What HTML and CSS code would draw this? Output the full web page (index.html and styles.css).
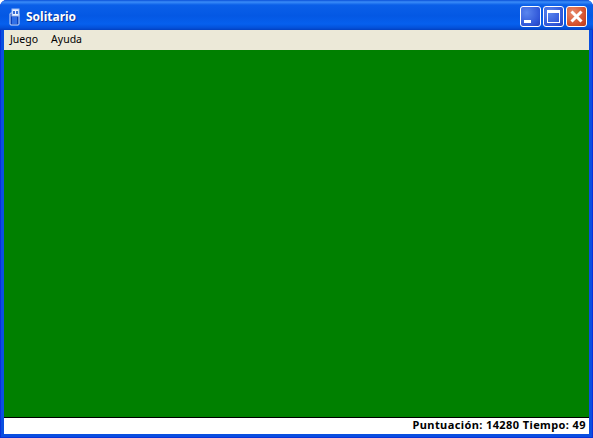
FILE: index.html
```html
<!DOCTYPE html>
<html lang="es">
<head>
    <meta charset="UTF-8">
    <title>Solitario</title>
    <link rel="stylesheet" href="styles.css">
</head>
<body>
    <div class="window">
        <div class="titlebar">
            <svg class="app-icon" width="14" height="18" viewBox="0 0 14 18">
                <rect x="2" y="5" width="9" height="12" rx="1" fill="#0a3fb8" stroke="#cfe0ff"/>
                <rect x="4" y="1" width="7" height="7" fill="#eef4ff" stroke="#9fc0f5"/>
                <rect x="5" y="3" width="2" height="3" fill="#3a6fd8"/>
                <rect x="8" y="3" width="2" height="3" fill="#3a6fd8"/>
                <rect x="4" y="9" width="5" height="7" fill="#2f6ee6"/>
            </svg>
            <span class="title">Solitario</span>
            <div class="buttons">
                <div class="btn">
                    <svg width="21" height="21" viewBox="0 0 21 21"><rect x="4" y="14" width="7" height="3" fill="#fff"/></svg>
                </div>
                <div class="btn">
                    <svg width="21" height="21" viewBox="0 0 21 21"><rect x="4.5" y="4.5" width="12" height="12" fill="none" stroke="#fff"/><rect x="4" y="4" width="13" height="3" fill="#fff"/></svg>
                </div>
                <div class="btn close">
                    <svg width="21" height="21" viewBox="0 0 21 21"><path d="M5.5 5.5 L15.5 15.5 M15.5 5.5 L5.5 15.5" stroke="#fff" stroke-width="3" fill="none"/></svg>
                </div>
            </div>
        </div>
        <div class="client">
            <div class="menu">
                <span class="menu-item">Juego</span>
                <span class="menu-item">Ayuda</span>
            </div>
            <div class="table"></div>
            <div class="status">Puntuación: 14280 Tiempo: 49</div>
        </div>
    </div>
</body>
</html>
```
FILE: styles.css
```css
*{margin: 0; padding: 0; box-sizing: border-box;}

html, body{
    width: 593px;
    height: 438px;
    overflow: hidden;
    background-color: #fff;
}

.window{
    width: 593px;
    height: 438px;
    display: flex;
    flex-direction: column;
    background-color: #0a4fe0;
    box-shadow: inset 1px 0 0 #0831d9, inset -1px 0 0 #0831d9, inset 0 -1px 0 #0831d9;
    border-radius: 7px 7px 0 0;
    overflow: hidden;
    font-family: "Noto Sans", "Liberation Sans", sans-serif;
}

.titlebar{
    height: 30px;
    flex-shrink: 0;
    display: flex;
    align-items: center;
    padding: 3px 6px 0 8px;
    background: linear-gradient(to bottom, #0a50d8 0, #3a8cf8 2px, #0a5fe8 5px, #0458e4 16px, #0660ee 24px, #0450d8 28px, #0340c0 30px);
}

.app-icon{
    flex-shrink: 0;
}

.title{
    margin-left: 4px;
    color: #fff;
    font-size: 12px;
    font-weight: bold;
    text-shadow: 1px 1px 0 #0a2f90;
}

.buttons{
    margin-left: auto;
    display: flex;
    gap: 2px;
}

.btn{
    width: 21px;
    height: 21px;
    border: 1px solid #fff;
    border-radius: 3px;
    background: radial-gradient(circle at 30% 30%, #5a86ee, #2f56d8 70%, #2440b8);
    overflow: hidden;
}

.btn svg{
    display: block;
    margin: -1px;
}

.close{
    background: radial-gradient(circle at 30% 30%, #e88a6c, #d4502c 65%, #b83a1c);
}

.client{
    flex: 1;
    display: flex;
    flex-direction: column;
    margin: 0 4px 4px;
    min-height: 0;
}

.menu{
    height: 20px;
    flex-shrink: 0;
    display: flex;
    align-items: center;
    gap: 13px;
    padding: 0 0 3px 6px;
    background-color: #ece9d8;
    font-size: 10.5px;
    color: #000;
}

.table{
    flex: 1;
    background-color: #008000;
}

.status{
    height: 17px;
    flex-shrink: 0;
    background-color: #fff;
    border-top: 1px solid #000;
    text-align: right;
    padding-right: 3px;
    font-size: 11px;
    font-weight: bold;
    letter-spacing: 0.4px;
    line-height: 14px;
    color: #000;
}
```
